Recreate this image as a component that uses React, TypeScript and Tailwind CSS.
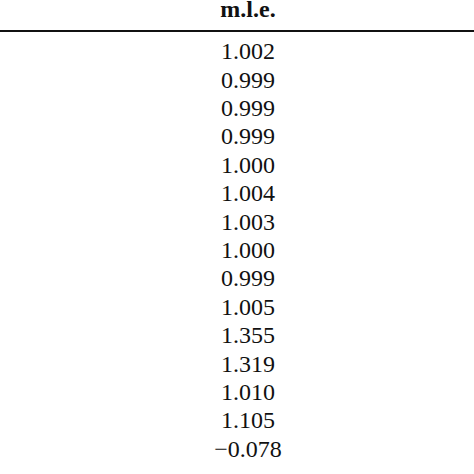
const values = [
  '1.002',
  '0.999',
  '0.999',
  '0.999',
  '1.000',
  '1.004',
  '1.003',
  '1.000',
  '0.999',
  '1.005',
  '1.355',
  '1.319',
  '1.010',
  '1.105',
  '\u22120.078',
];

export default function App() {
  return (
    <div
      className="w-[474px] h-[474px] overflow-hidden bg-white text-[#111]"
      style={{ fontFamily: '"Liberation Serif", "Times New Roman", serif' }}
    >
      <div className="border-b-2 border-[#111] pb-[10.5px] pl-[22px] text-center text-[24px] font-bold leading-[19px]">
        m.l.e.
      </div>
      <div className="flex flex-col pt-[5.7px] pl-[22px] text-center text-[24px] leading-[28.4px]">
        {values.map((v, i) => (
          <div key={i}>{v}</div>
        ))}
      </div>
    </div>
  );
}
